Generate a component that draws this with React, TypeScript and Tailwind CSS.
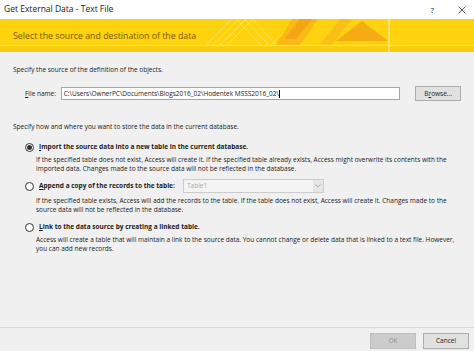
export default function App() {
  return (
    <div className="w-[474px] h-[351px] bg-[#f0f0f0] flex flex-col overflow-hidden font-['Open_Sans','Noto_Sans',sans-serif] text-[#1a1a1a]">
      {/* title bar */}
      <div className="h-[19px] bg-white flex items-center pl-[4px] pr-[6px] text-[8.5px]">
        <span>Get External Data - Text File</span>
        <span className="ml-auto mr-[24px] text-[8px]">?</span>
        <svg width="8" height="8" viewBox="0 0 8 8" className="mr-[2px]">
          <path d="M0.5 0.5 L7.5 7.5 M7.5 0.5 L0.5 7.5" stroke="#333" strokeWidth="0.8" />
        </svg>
      </div>

      {/* banner */}
      <div className="relative h-[33px] bg-[#fdd20e]">
        <svg width="474" height="33" viewBox="0 0 474 33" className="absolute inset-0">
          <g stroke="#fff2a8" strokeWidth="0.6" opacity="0.8">
            <path d="M205 27 L232 0 M212 27 L239 0 M219 27 L246 0 M226 27 L253 0" />
            <path d="M236 0 L262 27 M244 0 L270 27 M252 0 L278 27" />
            <path d="M270 27 L297 0 M278 27 L305 0" />
          </g>
          <polygon points="292,0 318,0 300,26 276,26" fill="#f8b417" opacity="0.8" />
          <polygon points="300,0 312,0 296,20 284,20" fill="#f49b12" opacity="0.7" />
          <polygon points="320,26 340,0 352,0 332,26" fill="#f9bc1a" opacity="0.8" />
          <polygon points="336,22 362,2 388,22" fill="#f5a514" opacity="0.85" />
          <rect x="0" y="26" width="474" height="1" fill="#fde98c" />
          <rect x="0" y="27" width="474" height="6" fill="#f9cc10" />
          <rect x="388.5" y="0" width="1" height="33" fill="#fff7c4" />
        </svg>
        <div className="relative pl-[13px] pt-[11px] text-[8.8px] leading-[12px] text-[#7a5a00]">
          Select the source and destination of the data
        </div>
      </div>

      {/* body */}
      <div className="flex flex-col px-[13px] text-[6.5px]">
        <div className="mt-[13px] leading-[10px]">Specify the source of the definition of the objects.</div>

        <div className="mt-[11px] flex items-center pl-[12px] h-[15px]">
          <span className="w-[36px] leading-[10px]">
            <u>F</u>ile name:
          </span>
          <div className="w-[342px] h-[13px] bg-white border border-[#a6a6a6] flex items-center pl-[2px] leading-[10px]">
            <span>C:\Users\OwnerPC\Documents\Blogs2016_02\Hodentek MSSS2016_02\</span>
            <span className="w-[1px] h-[8px] bg-black" />
          </div>
          <div className="ml-[15px] w-[46px] h-[15px] bg-[#e1e1e1] border border-[#adadad] flex items-center justify-center leading-[10px]">
            B<u>r</u>owse...
          </div>
        </div>

        <div className="mt-[21px] leading-[10px]">Specify how and where you want to store the data in the current database.</div>

        {/* option 1 */}
        <div className="mt-[10px] flex items-center pl-[12px] h-[10px]">
          <Radio checked />
          <span className="ml-[5px] font-bold leading-[10px]">
            <u>I</u>mport the source data into a new table in the current database.
          </span>
        </div>
        <div className="mt-[3px] pl-[23px] leading-[9px] whitespace-nowrap">
          If the specified table does not exist, Access will create it. If the specified table already exists, Access might overwrite its contents with the
          <br />
          imported data. Changes made to the source data will not be reflected in the database.
        </div>

        {/* option 2 */}
        <div className="mt-[6px] flex items-center pl-[12px] h-[14px]">
          <Radio />
          <span className="ml-[5px] w-[144px] font-bold leading-[10px]">
            <u>A</u>ppend a copy of the records to the table:
          </span>
          <div className="w-[141px] h-[14px] bg-[#f4f4f4] border border-[#cccccc] flex items-center">
            <span className="pl-[3px] text-[#a8a8a8] leading-[10px]">Table1</span>
            <div className="ml-auto w-[10px] h-full bg-[#e6e6e6] flex items-center justify-center">
              <svg width="6" height="4" viewBox="0 0 6 4">
                <path d="M0.5 0.5 L3 3 L5.5 0.5" fill="none" stroke="#a0a0a0" strokeWidth="0.8" />
              </svg>
            </div>
          </div>
        </div>
        <div className="mt-[3px] pl-[23px] leading-[9px] whitespace-nowrap">
          If the specified table exists, Access will add the records to the table. If the table does not exist, Access will create it. Changes made to the
          <br />
          source data will not be reflected in the database.
        </div>

        {/* option 3 */}
        <div className="mt-[8px] flex items-center pl-[12px] h-[10px]">
          <Radio />
          <span className="ml-[5px] font-bold leading-[10px]">
            <u>L</u>ink to the data source by creating a linked table.
          </span>
        </div>
        <div className="mt-[3px] pl-[23px] leading-[9px] whitespace-nowrap">
          Access will create a table that will maintain a link to the source data. You cannot change or delete data that is linked to a text file. However,
          <br />
          you can add new records.
        </div>
      </div>

      {/* footer */}
      <div className="mt-auto border-t border-[#d9d9d9] flex justify-end gap-[7px] pt-[5px] pb-[2px] pr-[5px] text-[6.5px]">
        <div className="w-[46px] h-[16px] bg-[#cccccc] border border-[#bfbfbf] text-[#8c8c8c] flex items-center justify-center">OK</div>
        <div className="w-[46px] h-[16px] bg-[#e1e1e1] border border-[#adadad] flex items-center justify-center">Cancel</div>
      </div>
    </div>
  );
}

function Radio({ checked = false }: { checked?: boolean }) {
  return (
    <div className="w-[9px] h-[9px] rounded-full border border-[#333] bg-white flex items-center justify-center shrink-0">
      {checked && <div className="w-[5px] h-[5px] rounded-full bg-[#333]" />}
    </div>
  );
}
